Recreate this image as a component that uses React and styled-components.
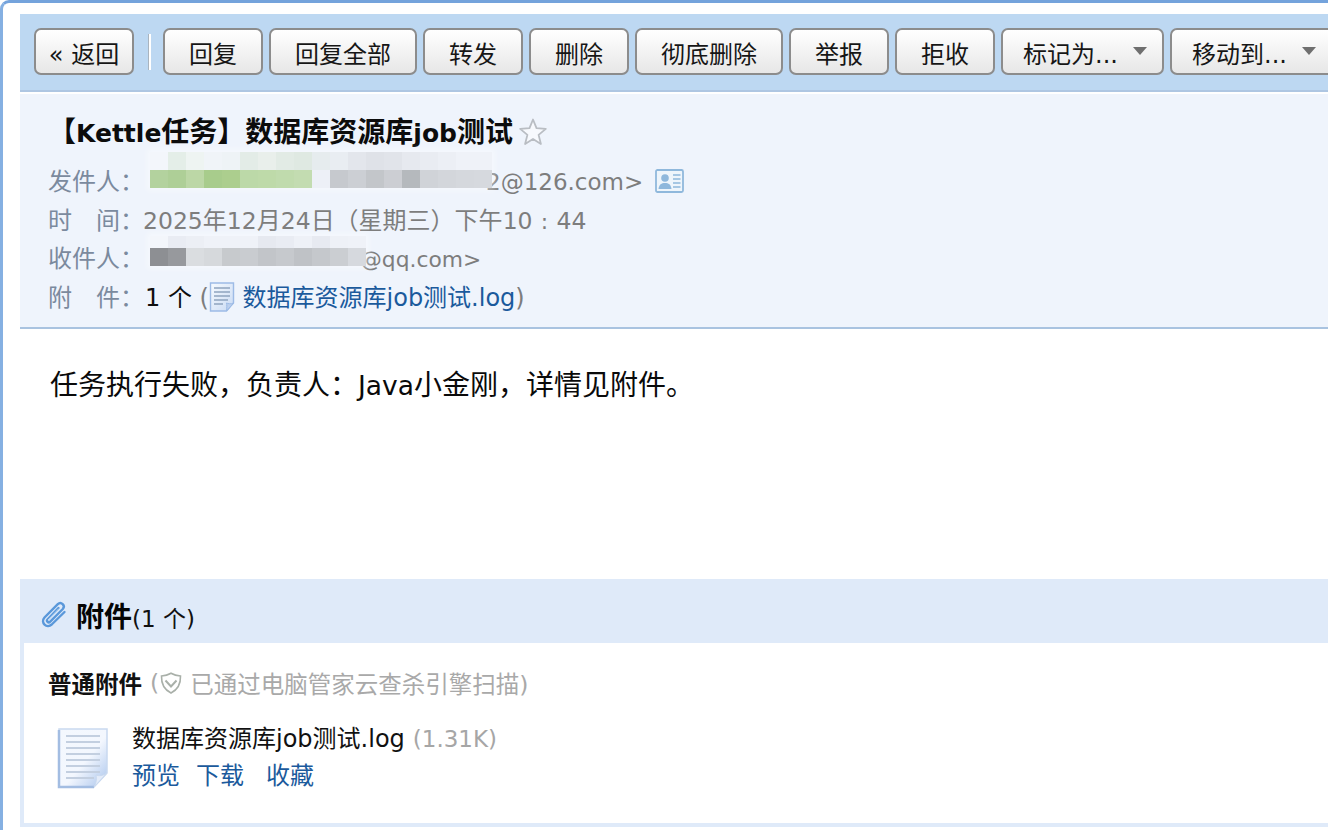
import React from "react";
import styled, { createGlobalStyle } from "styled-components";

const Global = createGlobalStyle`
  html, body { margin: 0; padding: 0; background: #fff; }
  body { font-family: "DejaVu Sans", "Noto Sans CJK SC", sans-serif; }
  * { box-sizing: border-box; }
`;

const Frame = styled.div`
  width: 1328px; height: 830px; overflow: hidden;
  background: #fff;
  border-top: 3px solid #74a3dc;
  border-left: 3px solid #85b0e2;
  border-top-left-radius: 9px;
  padding: 11px 0 0 17px;
`;
const Toolbar = styled.div`
  height: 78px;
  background: #bdd8f2;
  border-bottom: 2px solid #aec6e2;
  display: flex; align-items: flex-start;
  padding: 14px 0 0 14px;
  gap: 6px;
  white-space: nowrap;
`;
const Btn = styled.div`
  flex: none;
  width: ${p => p.$w}px; height: 47px;
  border: 2px solid #8c8c8c; border-radius: 7px;
  background: linear-gradient(#ffffff, #e7e7e7);
  display: flex; align-items: center;
  justify-content: ${p => (p.$menu ? "flex-start" : "center")};
  padding: ${p => (p.$menu ? "6px 0 0 20px" : "6px 0 0")};
  font-size: 24px; color: #161616; line-height: 1;
`;
const Sep = styled.div`
  flex: none; width: 3px; height: 36px;
  margin: 6px 6px 0 8px;
  background: #fff; border-left: 1px solid #a9b4bf;
`;
const Caret = styled.span`
  width: 0; height: 0; flex: none; margin: 0 0 7px 15px;
  border-left: 7px solid transparent; border-right: 7px solid transparent;
  border-top: 8px solid #6f6f6f;
`;
const Head = styled.div`
  margin-top: 2px;
  height: 235px;
  background: #eff4fc;
  border-bottom: 2px solid #a9c3e0;
  padding: 16px 0 0 28px;
  white-space: nowrap;
`;
const Title = styled.div`
  display: flex; align-items: baseline; height: 40px; line-height: 40px; padding-top: 3px;
  font-size: 28px; font-weight: 700; color: #0c0c0c;
  svg { margin-left: 6px; align-self: center; }
`;
const Rows = styled.div`
  margin-top: 10px;
`;
const Row = styled.div`
  position: relative;
  display: flex; align-items: baseline;
  height: 38.7px; line-height: 38.7px; padding-top: 3px; font-size: 24px; color: #7d7d7d;
  > svg { align-self: center; }
`;
const Label = styled.span`
  flex: none; width: 95px; color: #7b8a9e; font-size: 24px;
`;
const Lat = styled.span`
  font-size: ${p => p.$s || 23.5}px;
`;
const Colon = styled.span`
  display: inline-block; width: 24px; text-align: center; font-size: 22px;
`;
const Hidden = styled.span`
  flex: none; display: inline-block; width: ${p => p.$w}px; height: 1px;
`;
const Value = styled.span`
  color: #0e0e0e; margin-left: 2px;
`;
const Link = styled.span`
  color: #1b5a9c;
  margin-right: ${p => p.$gap || 0}px;
`;
const CardSlot = styled.span`
  display: inline-flex; margin-left: 12px; align-self: center;
`;
const Mosaic = styled.div`
  position: absolute;
  left: ${p => p.$x}px; top: ${p => p.$y}px;
  display: grid;
  grid-template-columns: repeat(${p => p.$cols}, 18px);
  grid-template-rows: ${p => p.$top}px 18px;
  box-shadow: 0 0 6px 3px rgba(255, 255, 255, 0.4);
`;
const Cell = styled.i`
  display: block;
  background: ${p => p.$c};
`;
const Body = styled.div`
  height: 250px;
  padding: 38px 0 0 30px;
  font-size: 28px; line-height: 38px; color: #0a0a0a;
  white-space: nowrap;
`;
const Attach = styled.div`
  background: #dfeaf9;
  padding: 0 0 4px 4px;
`;
const AttachHead = styled.div`
  height: 64px; margin-left: -4px; padding: 10px 0 0 20px;
  display: flex; align-items: baseline; line-height: 58px;
  font-size: 23px; color: #111;
  svg { margin-right: 8px; margin-top: -4px; align-self: center; }
`;
const AttachTitle = styled.b`
  font-size: 28px; font-weight: 700; color: #050505;
`;
const AttachBody = styled.div`
  background: #fff;
  height: 180px;
  padding: 20px 0 0 24px;
  white-space: nowrap;
`;
const Sub = styled.div`
  display: flex; align-items: center; height: 40px; font-size: 23.5px; color: #a9a9a9;
  b { color: #111; font-weight: 700; margin-right: 8px; }
  svg { margin: 0 8px 0 1px; }
`;
const FileRow = styled.div`
  display: flex; margin-top: 14px;
`;
const FileIcon = styled.div`
  flex: none; width: 84px; padding: 10px 0 0 9px;
`;
const FileName = styled.div`
  height: 38px; display: flex; align-items: baseline; line-height: 38px; padding-top: 3px;
  font-size: 24px; color: #111;
  small { font-size: 23px; color: #a6a6a6; margin-left: 8px; }
`;
const FileLinks = styled.div`
  height: 36px; display: flex; align-items: center; font-size: 24px;
`;

const Buttons = [["回复", 100], ["回复全部", 148], ["转发", 100], ["删除", 100], ["彻底删除", 148], ["举报", 100], ["拒收", 100]];

const senderCells = [
  ["#f3f6fb","#e4eee8","#eef4f2","#f0f4f8","#eef3f6","#e3ece7","#e9efeb","#e2ebe5","#dfe9e2","#e6ecee","#e9edf2","#e3e6ec","#dfe2e8","#e1e4ea","#e6e9ef","#e9ecf2","#eceff5","#eff2f8","#eff2f8"],
  ["#b3d29e","#aecf97","#bcd7a6","#a8cc8c","#acce8e","#bcd9a8","#bedaa9","#c0dbad","#c3dcb1","#edf0f7","#c6c9ce","#cccfd4","#c3c6ca","#ccced3","#b5b9bd","#d0d3d8","#d3d6db","#d5d8dd","#d6d9de"],
];
const rcptCells = [
  ["#f3f6fb","#e9ecf3","#eceff5","#eff2f8","#eff2f8","#eff2f8","#e6e9f0","#e9ecf3","#eef1f7","#e7eaf1","#eef1f7","#eff2f8"],
  ["#8d8f93","#97999d","#dadde0","#d6d9dc","#c7cacd","#c9ccd0","#c2c5c9","#c6c9cd","#bfc2c6","#c5c8cc","#cbced2","#d6d9de"],
];

const Star = () => (
  <svg width="28" height="28" viewBox="0 0 28 28">
    <path d="M14 1.500l3.500 8.700 9.300.7-7.200 6 2.300 9.100L14 21l-7.900 5 2.300-9.100-7.200-6 9.300-.7z" fill="#f7f9fd" stroke="#b9bdc3" strokeWidth="1.800" strokeLinejoin="round" />
  </svg>
);
const Card = () => (
  <svg width="29" height="24" viewBox="0 0 29 24">
    <rect x="1" y="1" width="27" height="22" rx="1.500" fill="#eef5fb" stroke="#8fb8dc" strokeWidth="1.800" />
    <circle cx="10" cy="9" r="3.800" fill="#8fb8dc" />
    <path d="M3.500 20c.5-4.500 3-6 6.500-6s6 1.500 6.500 6z" fill="#8fb8dc" />
    <path d="M18 6h7.500M18 10h7.500M18 14h7.500M18 18h7.500" stroke="#8fb8dc" strokeWidth="1.700" />
  </svg>
);
const Doc = () => (
  <svg width="26" height="30" viewBox="0 0 26 30">
    <defs>
      <linearGradient id="dg" x1="0" y1="0" x2="1" y2="1">
        <stop offset="0" stopColor="#f7fbff" />
        <stop offset="1" stopColor="#c9daf3" />
      </linearGradient>
    </defs>
    <path d="M1.500 1h23v20l-7 8h-16z" fill="url(#dg)" stroke="#9dbbe6" strokeWidth="1.400" />
    <path d="M5 6h16M5 10h16M5 14h16M5 18h14M5 22h9" stroke="#8fa4bf" strokeWidth="1.300" />
    <path d="M24.500 21c-2 1.500-6 .5-7 0 .5 2 .3 5 0 8z" fill="#bcd0ee" stroke="#9dbbe6" strokeWidth="1" />
  </svg>
);
const BigDoc = () => (
  <svg width="52" height="62" viewBox="0 0 52 62">
    <defs>
      <linearGradient id="bg" x1="0" y1="0" x2="1" y2="1">
        <stop offset="0" stopColor="#f4f8fe" />
        <stop offset="0.55" stopColor="#f3f7fe" />
        <stop offset="1" stopColor="#a9c4ec" />
      </linearGradient>
    </defs>
    <path d="M2 2h48v44L37 60H2z" fill="url(#bg)" stroke="#c9d9ef" strokeWidth="1.500" />
    <path d="M2 3v57h35" fill="none" stroke="#a3bde2" strokeWidth="2.500" />
    {[9, 15, 21, 27, 33, 39, 45, 51].map((y, i) => (
      <path key={y} d={`M9 ${y}h${i === 7 ? 28 : 34}`} stroke="#c3cfe0" strokeWidth="2" />
    ))}
    <path d="M50 46c-4 3-8 3-11 2 1 4 0 9-2 12z" fill="#e4ecf9" stroke="#c9d9ef" />
  </svg>
);
const Clip = () => (
  <svg width="28" height="28" viewBox="0 0 28 28">
    <path d="M18.500 8L7.500 19.500c-1.500 1.700.8 3.800 2.500 2.300L22.800 9c3-3.300-1.700-8-5-4.800L4.500 17.500c-4.500 5 2.300 11.500 7.200 7L24.500 12" fill="none" stroke="#5a98da" strokeWidth="2.400" strokeLinecap="round" />
    <path d="M19 8.500L8 20" fill="none" stroke="#bcd9f5" strokeWidth="1" />
  </svg>
);
const Shield = () => (
  <svg width="22" height="22" viewBox="0 0 22 22">
    <path d="M11 1.200c3.300 2 6 2.600 9.500 2.800.3 8-2.500 13.500-9.500 17C4 17.500 1.200 12 1.500 4 5 3.800 7.700 3.200 11 1.200z" fill="none" stroke="#a9b0a9" strokeWidth="1.600" />
    <path d="M5.500 8.500L11 14.500l5.500-6" fill="none" stroke="#a9b0a9" strokeWidth="2" />
  </svg>
);

export default function App() {
  return (
    <>
      <Global />
      <Frame>
        <Toolbar>
          <Btn $w={100}>« 返回</Btn>
          <Sep />
          {Buttons.map(([t, w]) => <Btn key={t} $w={w}>{t}</Btn>)}
          <Btn $w={163} $menu>标记为...<Caret /></Btn>
          <Btn $w={170} $menu>移动到...<Caret /></Btn>
        </Toolbar>
        <Head>
          <Title>【<Lat $s={25}>Kettle</Lat>任务】数据库资源库<Lat $s={25}>job</Lat>测试<Star /></Title>
          <Rows>
            <Row>
              <Label>发件人：</Label>
              <Hidden $w={343} /><Lat $s={23}>2@126.com&gt;</Lat><CardSlot><Card /></CardSlot>
              <Mosaic $x={102} $y={-8} $cols={19} $top={18}>
                {senderCells.flat().map((c, i) => <Cell key={i} $c={c} />)}
              </Mosaic>
            </Row>
            <Row>
              <Label>时　间：</Label>
              <Lat>2025</Lat>年<Lat>12</Lat>月<Lat>24</Lat>日（星期三）下午<Lat>10</Lat><Colon>:</Colon><Lat>44</Lat>
            </Row>
            <Row>
              <Label>收件人：</Label>
              <Hidden $w={217} /><Lat $s={21.8}>@qq.com&gt;</Lat>
              <Mosaic $x={102} $y={-1} $cols={12} $top={12}>
                {rcptCells.flat().map((c, i) => <Cell key={i} $c={c} />)}
              </Mosaic>
            </Row>
            <Row>
              <Label>附　件：</Label>
              <Value>1 个</Value>&nbsp;(<Doc /><Link>&nbsp;数据库资源库job测试.log</Link>)
            </Row>
          </Rows>
        </Head>
        <Body>任务执行失败，负责人：<Lat $s={26.5}>Java</Lat>小金刚，详情见附件。</Body>
        <Attach>
          <AttachHead><Clip /><AttachTitle>附件</AttachTitle>(1 个)</AttachHead>
          <AttachBody>
            <Sub><b>普通附件</b>(<Shield />已通过电脑管家云查杀引擎扫描)</Sub>
            <FileRow>
              <FileIcon><BigDoc /></FileIcon>
              <div>
                <FileName>数据库资源库job测试.log<small>(1.31K)</small></FileName>
                <FileLinks>
                  <Link $gap={16}>预览</Link><Link $gap={22}>下载</Link><Link>收藏</Link>
                </FileLinks>
              </div>
            </FileRow>
          </AttachBody>
        </Attach>
      </Frame>
    </>
  );
}
